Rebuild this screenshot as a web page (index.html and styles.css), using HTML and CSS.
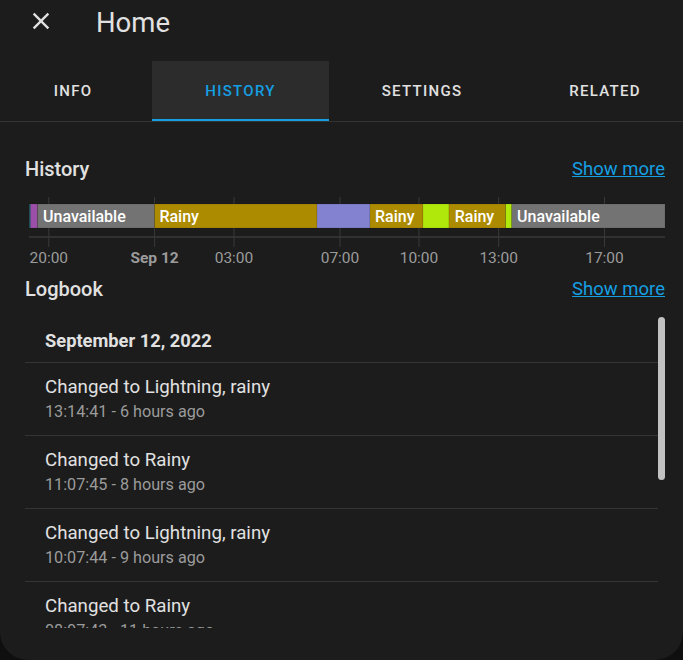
FILE: index.html
```html
<!DOCTYPE html>
<html lang="en">
<head>
    <meta charset="UTF-8">
    <meta name="viewport" content="width=device-width, initial-scale=1.0">
    <title>Home</title>
    <link rel="stylesheet" href="styles.css">
</head>
<body>
    <div class="dialog">
        <div class="dialog-header">
            <button class="close-button" aria-label="Close">
                <svg viewBox="0 0 24 24" width="28" height="28">
                    <path d="M19,6.41L17.59,5L12,10.59L6.41,5L5,6.41L10.59,12L5,17.59L6.41,19L12,13.41L17.59,19L19,17.59L13.41,12L19,6.41Z"/>
                </svg>
            </button>
            <div class="dialog-title">Home</div>
        </div>

        <div class="tabs">
            <div class="tab tab-info">Info</div>
            <div class="tab tab-history active">History</div>
            <div class="tab tab-settings">Settings</div>
            <div class="tab tab-related">Related</div>
        </div>

        <div class="content">
            <div class="section-header">
                <h2>History</h2>
                <a href="#" class="show-more">Show more</a>
            </div>

            <svg class="timeline" width="640" height="76" viewBox="0 0 640 76">
                <g class="grid">
                    <line x1="23.8" y1="7" x2="23.8" y2="57"/>
                    <line x1="129.6" y1="7" x2="129.6" y2="57"/>
                    <line x1="209" y1="7" x2="209" y2="57"/>
                    <line x1="315" y1="7" x2="315" y2="57"/>
                    <line x1="394" y1="7" x2="394" y2="57"/>
                    <line x1="473.7" y1="7" x2="473.7" y2="57"/>
                    <line x1="579.5" y1="7" x2="579.5" y2="57"/>
                </g>
                <line class="axis" x1="4" y1="47" x2="640" y2="47"/>
                <g class="bar">
                    <rect class="seg-teal" x="4.6" y="14" width="1" height="24"/>
                    <rect class="seg-purple" x="5.5" y="14" width="7" height="24"/>
                    <rect class="seg-unavailable" x="12.5" y="14" width="117.1" height="24"/>
                    <rect class="seg-rainy" x="129.6" y="14" width="162.4" height="24"/>
                    <rect class="seg-cloudy" x="292" y="14" width="53" height="24"/>
                    <rect class="seg-rainy" x="345" y="14" width="53" height="24"/>
                    <rect class="seg-lightning" x="398" y="14" width="26" height="24"/>
                    <rect class="seg-rainy" x="424" y="14" width="56.6" height="24"/>
                    <rect class="seg-lightning" x="480.6" y="14" width="6.2" height="24"/>
                    <rect class="seg-unavailable" x="486.8" y="14" width="153.2" height="24"/>
                </g>
                <g class="seg-labels">
                    <text x="18" y="31.5">Unavailable</text>
                    <text x="134.4" y="31.5">Rainy</text>
                    <text x="350" y="31.5">Rainy</text>
                    <text x="429.7" y="31.5">Rainy</text>
                    <text x="492" y="31.5">Unavailable</text>
                </g>
                <g class="tick-labels">
                    <text x="23.8" y="72.5">20:00</text>
                    <text x="129.6" y="72.5" class="day">Sep 12</text>
                    <text x="209" y="72.5">03:00</text>
                    <text x="315" y="72.5">07:00</text>
                    <text x="394" y="72.5">10:00</text>
                    <text x="473.7" y="72.5">13:00</text>
                    <text x="579.5" y="72.5">17:00</text>
                </g>
            </svg>

            <div class="section-header logbook-header">
                <h2>Logbook</h2>
                <a href="#" class="show-more">Show more</a>
            </div>

            <div class="logbook">
                <div class="logbook-list">
                    <div class="logbook-date">September 12, 2022</div>
                    <div class="entry">
                        <div class="entry-message">Changed to Lightning, rainy</div>
                        <div class="entry-time">13:14:41 - 6 hours ago</div>
                    </div>
                    <div class="entry">
                        <div class="entry-message">Changed to Rainy</div>
                        <div class="entry-time">11:07:45 - 8 hours ago</div>
                    </div>
                    <div class="entry">
                        <div class="entry-message">Changed to Lightning, rainy</div>
                        <div class="entry-time">10:07:44 - 9 hours ago</div>
                    </div>
                    <div class="entry">
                        <div class="entry-message">Changed to Rainy</div>
                        <div class="entry-time">08:07:43 - 11 hours ago</div>
                    </div>
                </div>
                <div class="scrollbar">
                    <div class="scroll-thumb"></div>
                </div>
            </div>
        </div>
    </div>
</body>
</html>
```

FILE: styles.css
```css
body {
    margin: 0;
    background-color: #0f0f0f;
    font-family: Roboto, 'Noto Sans', sans-serif;
    color: #e1e1e1;
}

.dialog {
    width: 683px;
    height: 660px;
    background-color: #1c1c1c;
    border-radius: 0 0 28px 28px;
    overflow: hidden;
    display: flex;
    flex-direction: column;
}

.dialog-header {
    display: flex;
    align-items: center;
    height: 42px;
    padding-left: 26px;
}

.close-button {
    width: 29px;
    height: 29px;
    padding: 0;
    border: none;
    background: none;
    display: flex;
    align-items: center;
    justify-content: center;
    fill: #e1e1e1;
}

.dialog-title {
    margin-left: 41px;
    padding-top: 2px;
    font-size: 27.5px;
    font-weight: 400;
    color: #e1e1e1;
}

.tabs {
    display: flex;
    margin-top: 19px;
    height: 60px;
    border-bottom: 1px solid #333333;
    overflow: hidden;
}

.tab {
    flex: none;
    display: flex;
    align-items: center;
    justify-content: center;
    box-sizing: border-box;
    font-size: 15px;
    font-weight: 500;
    letter-spacing: 1.3px;
    text-transform: uppercase;
    color: #e1e1e1;
}

.tab-info { width: 152px; padding-right: 6px; }
.tab-history { width: 177px; }
.tab-settings { width: 186px; }
.tab-related { width: 180px; }

.tab.active {
    background-color: #2c2c2c;
    color: #159fe2;
    border-bottom: 2px solid #159fe2;
    padding-top: 2px;
}

.content {
    padding: 33px 18px 0 25px;
}

.section-header {
    display: flex;
    justify-content: space-between;
    align-items: center;
    height: 28px;
}

.section-header h2 {
    margin: 0;
    font-size: 20px;
    font-weight: 500;
    color: #e1e1e1;
}

.show-more {
    font-size: 18.5px;
    color: #159fe2;
    text-decoration: underline;
}

.timeline {
    display: block;
    margin-top: 7px;
    font-family: Roboto, sans-serif;
}

.grid line,
.axis {
    stroke: #393939;
    stroke-width: 1;
}

.axis {
    stroke-width: 1.5;
}

.seg-teal { fill: #2fb3c2; }
.seg-purple { fill: #9c4fa8; }
.seg-unavailable { fill: #737373; }
.seg-rainy { fill: #ad8b00; }
.seg-cloudy { fill: #8282d0; }
.seg-lightning { fill: #b1e80b; }

.bar rect {
    stroke: rgba(0, 0, 0, 0.18);
    stroke-width: 0.6;
}

.seg-labels text {
    fill: #ffffff;
    font-size: 16px;
    font-weight: 500;
}

.tick-labels text {
    fill: #9b9b9b;
    font-size: 15.5px;
    text-anchor: middle;
}

.tick-labels .day {
    font-weight: 700;
}

.logbook-header {
    margin-top: 9px;
}

.logbook {
    display: flex;
    margin-top: 14px;
    height: 311px;
    overflow: hidden;
}

.logbook-list {
    flex: 1;
}

.logbook-date {
    height: 45px;
    box-sizing: border-box;
    padding-left: 20px;
    padding-top: 1px;
    display: flex;
    align-items: center;
    font-size: 18.3px;
    font-weight: 700;
    color: #e1e1e1;
}

.entry {
    border-top: 1px solid #353535;
    padding: 12px 20px 12px;
    height: 73px;
    box-sizing: border-box;
}

.entry-message {
    font-size: 18.7px;
    line-height: 24px;
    color: #e1e1e1;
}

.entry-time {
    margin-top: 2px;
    font-size: 16.2px;
    line-height: 22px;
    color: #9b9b9b;
}

.scrollbar {
    width: 7px;
    flex: none;
}

.scroll-thumb {
    height: 163px;
    background-color: #c2c2c2;
    border-radius: 4px;
}
```
